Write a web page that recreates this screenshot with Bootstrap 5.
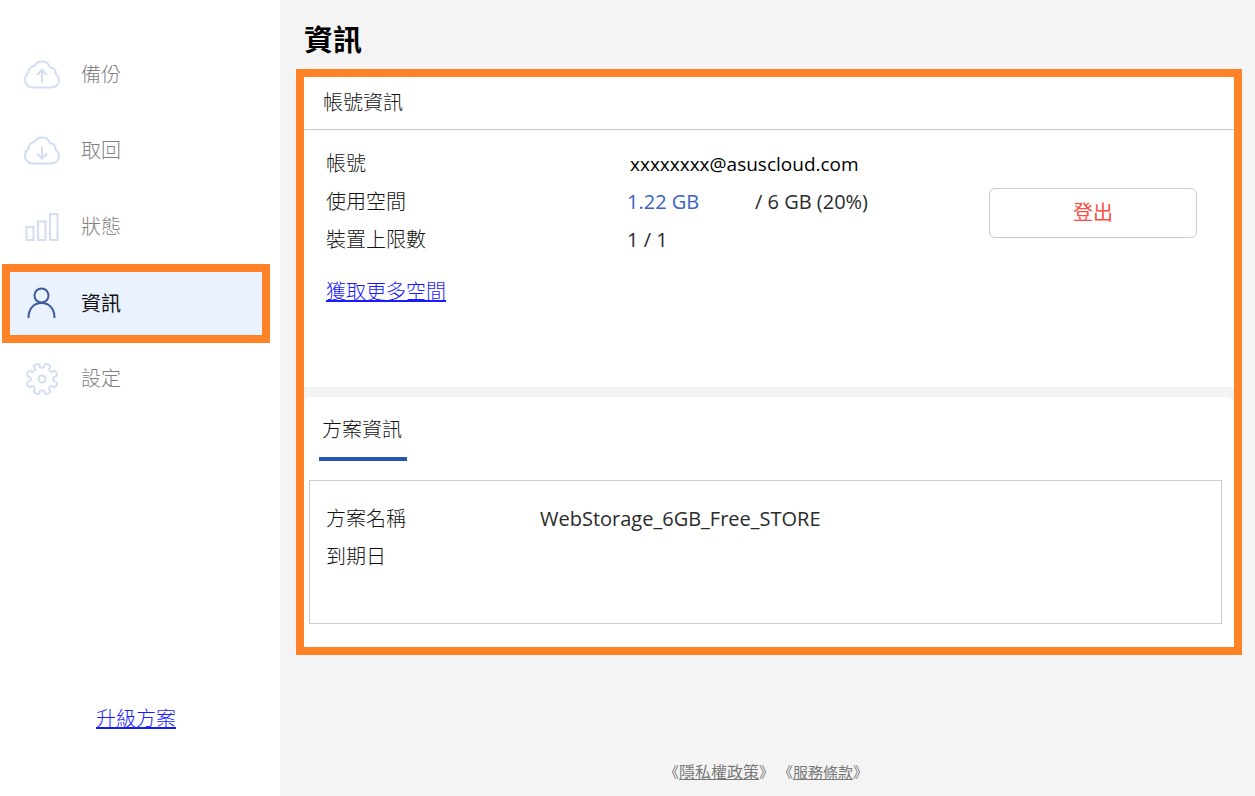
<!DOCTYPE html>
<html lang="zh-Hant">
<head>
<meta charset="utf-8">
<meta name="viewport" content="width=device-width, initial-scale=1">
<title>資訊</title>
<link href="https://cdn.jsdelivr.net/npm/bootstrap@5.3.0/dist/css/bootstrap.min.css" rel="stylesheet">
<style>
  body { font-family: "Open Sans", "Noto Sans CJK TC", sans-serif; font-size: 20px; font-weight: 300; line-height: 38px; color: #111; background: #f4f4f4; }
  .side { flex: 0 0 280px; background: #fff; padding-top: 37px; padding-bottom: 58px; }
  .side-item { height: 76px; padding-left: 24px; gap: 21px; color: #808080; text-decoration: none; }
  .side-item svg { width: 36px; height: 36px; flex: none; fill: none; stroke: #d3def2; stroke-width: 2; }
  .side-item.current { height: 79px; margin: -1px 10px -2px 2px; padding-left: 14px; border: 8px solid #ff8227; background: #eaf1ff; color: #111; font-weight: 400; }
  .side-item.current svg { stroke: #3c5a9c; }
  .plain-link { color: #1a1aff; }
  .main-pane { min-width: 0; padding: 20px 13px 4px 16px; }
  .page-title { font-size: 29px; font-weight: 700; line-height: 40px; color: #000; margin: 0 0 9px 8px; }
  .frame { border: 8px solid #ff8227; }
  .panel { background: #fff; }
  .panel-head { padding: 7px 19px; border-bottom: 1px solid #ccc; font-size: 20px; font-weight: 300; line-height: 38px; height: 53px; }
  .account { min-height: 257px; padding: 15px 37px 0 22px; border-radius: 0 0 4px 4px; }
  .account .lbl { flex: 0 0 301px; }
  .val { font-weight: 400; color: #2b2b2b; }
  .used { color: #3b62c4; flex: 0 0 128px; }
  .mail { font-size: 19px; color: #000; padding-left: 3px; }
  .more { margin-top: 14px; }
  .sign-out { width: 208px; height: 50px; margin-top: 43px; background: #fff; border: 1px solid #ccc; border-radius: 6px; color: #ff4d42; font-weight: 400; padding: 0; }
  .plan { margin-top: 10px; padding: 14px 12px 23px 5px; border-radius: 8px 8px 0 0; }
  .tab-title { font-size: 20px; font-weight: 300; line-height: 38px; width: 88px; margin: 0 0 19px 10px; padding: 0 3px 8px; border-bottom: 4px solid #2455b5; white-space: nowrap; }
  .plan-box { border: 1px solid #ccc; min-height: 144px; padding: 19px 16px; }
  .plan-box .lbl { flex: 0 0 214px; }
  .legal { font-size: 15px; font-weight: 400; line-height: 40px; color: #777; padding-right: 6px; }
  .legal a { color: #777; }
  .legal .privacy { font-size: 16px; }
</style>
</head>
<body>
<div class="d-flex min-vh-100">
  <aside class="side d-flex flex-column">
    <nav class="d-flex flex-column">
      <a class="side-item d-flex align-items-center" href="#"><svg viewBox="0 0 36 36" aria-hidden="true"><path d="M9 30.500C4 30.500 1 27 1 23C1 19.500 2.500 17 4.500 16C4 12.500 7 9 10.500 9C12 6 14.500 4.500 18 4.500C22 4.500 25 7 26 10.500C29.500 10 32 12.500 31.500 16.500C34 18.500 35 20.500 35 23C35 27.500 31.500 30.500 27 30.500Z"/><path d="M18 25.500V13.500M13 18L18 13L23 18"/></svg><span>備份</span></a>
      <a class="side-item d-flex align-items-center" href="#"><svg viewBox="0 0 36 36" aria-hidden="true"><path d="M9 30.500C4 30.500 1 27 1 23C1 19.500 2.500 17 4.500 16C4 12.500 7 9 10.500 9C12 6 14.500 4.500 18 4.500C22 4.500 25 7 26 10.500C29.500 10 32 12.500 31.500 16.500C34 18.500 35 20.500 35 23C35 27.500 31.500 30.500 27 30.500Z"/><path d="M18 13.500V25.500M13 20.500L18 25.500L23 20.500"/></svg><span>取回</span></a>
      <a class="side-item d-flex align-items-center" href="#"><svg viewBox="0 0 36 36" aria-hidden="true"><path d="M2.500 18h7v13h-7zM14 12.500h7.500v18.500H14zM26 5h7.500v26H26z"/></svg><span>狀態</span></a>
      <a class="side-item current d-flex align-items-center" href="#" aria-current="page"><svg viewBox="0 0 36 36" aria-hidden="true"><circle cx="17.500" cy="9.500" r="7"/><path d="M4.500 32C4.500 23 9.500 17 17.500 17S30.500 23 30.500 32"/></svg><span>資訊</span></a>
      <a class="side-item d-flex align-items-center" href="#"><svg viewBox="-18 -18 36 36" aria-hidden="true"><defs><path id="tooth" d="M-4.290-10.350Q-2.100-11.200-2.900-13.200C-3.500-16.600 3.500-16.600 2.900-13.200Q2.100-11.200 4.290-10.350"/></defs><circle r="3.500"/><use href="#tooth" transform="rotate(22.500)"/><use href="#tooth" transform="rotate(67.500)"/><use href="#tooth" transform="rotate(112.500)"/><use href="#tooth" transform="rotate(157.500)"/><use href="#tooth" transform="rotate(202.500)"/><use href="#tooth" transform="rotate(247.500)"/><use href="#tooth" transform="rotate(292.500)"/><use href="#tooth" transform="rotate(337.500)"/></svg><span>設定</span></a>
    </nav>
    <div class="mt-auto text-center pe-2"><a class="plain-link" href="#">升級方案</a></div>
  </aside>

  <main class="main-pane flex-fill d-flex flex-column">
    <h1 class="page-title">資訊</h1>
    <div class="frame">
      <section class="panel">
        <h2 class="panel-head m-0">帳號資訊</h2>
        <div class="account d-flex justify-content-between align-items-start">
          <div>
            <div class="d-flex"><span class="lbl">帳號</span><span class="val mail">xxxxxxxx@asuscloud.com</span></div>
            <div class="d-flex"><span class="lbl">使用空間</span><span class="val used">1.22 GB</span><span class="val">/ 6 GB (20%)</span></div>
            <div class="d-flex"><span class="lbl">裝置上限數</span><span class="val">1 / 1</span></div>
            <div class="more"><a class="plain-link" href="#">獲取更多空間</a></div>
          </div>
          <button class="sign-out" type="button">登出</button>
        </div>
      </section>
      <section class="panel plan">
        <h2 class="tab-title">方案資訊</h2>
        <div class="plan-box">
          <div class="d-flex"><span class="lbl">方案名稱</span><span class="val">WebStorage_6GB_Free_STORE</span></div>
          <div class="d-flex"><span class="lbl">到期日</span></div>
        </div>
      </section>
    </div>
    <footer class="legal mt-auto text-center">《<a class="privacy" href="#">隱私權政策</a>》 《<a href="#">服務條款</a>》</footer>
  </main>
</div>
<script src="https://cdn.jsdelivr.net/npm/bootstrap@5.3.0/dist/js/bootstrap.bundle.min.js"></script>
</body>
</html>
